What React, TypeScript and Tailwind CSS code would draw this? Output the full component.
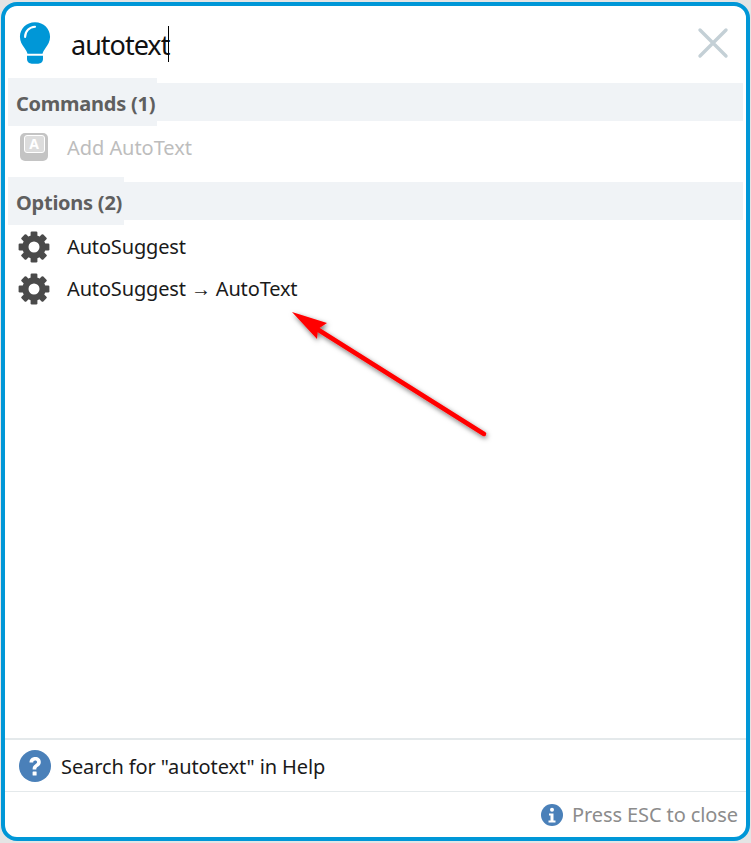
const font = { fontFamily: '"Noto Sans", "Open Sans", sans-serif' }

function Gear() {
  const teeth = [0, 45, 90, 135, 180, 225, 270, 315]
  return (
    <svg width="32" height="32" viewBox="0 0 32 32" className="shrink-0">
      {teeth.map(a => (
        <rect key={a} x="12.6" y="0.6" width="6.8" height="8" rx="1.2" fill="#4a4a4a" transform={`rotate(${a} 16 16)`} />
      ))}
      <circle cx="16" cy="16" r="8.6" fill="none" stroke="#4a4a4a" strokeWidth="6.2" />
    </svg>
  )
}

function Section({ label, width }: { label: string; width: string }) {
  return (
    <div className="mx-[3px] h-[38px] bg-[#f0f3f6] relative">
      <div className={`absolute left-0 top-[-5px] h-[48px] bg-[#f0f3f6] pl-2 pt-[3px] flex items-center text-[20px] font-bold text-[#5f5f5f] tracking-[-0.25px] ${width}`}>
        {label}
      </div>
    </div>
  )
}

function Row({ label }: { label: string }) {
  return (
    <div className="h-[42px] flex items-center pl-[13px] text-[20px] text-[#1a1a1a] tracking-[-0.15px]">
      <Gear />
      <span className="ml-[17px]">{label}</span>
    </div>
  )
}

export default function App() {
  return (
    <div className="w-[751px] h-[843px] bg-[#e4e4e4] overflow-hidden pt-[2px] pl-[1px]" style={font}>
      <div className="relative w-[749px] h-[839px] bg-white border-[4px] border-[#0097d7] rounded-[16px] flex flex-col">
        <div className="h-[77px] flex items-center pl-[14px] pr-[12px] shrink-0">
          <svg width="32" height="46" viewBox="1 0 34 46" className="shrink-0 mt-[-3px]">
            <path d="M18 1C8.6 1 2 8 2 16.4c0 5 2.3 8.600 4.800 12 1.800 2.500 2.700 4.300 3.200 6.100h16c.5-1.800 1.400-3.600 3.200-6.100 2.500-3.400 4.800-7 4.800-12C34 8 27.400 1 18 1z" fill="#0097d7" />
            <path d="M7.500 16.500C7.500 10.500 12 6 18 5.800" fill="none" stroke="#fff" strokeWidth="2.200" strokeLinecap="round" />
            <path d="M9.500 36.500h17v3.500c0 3-2.500 5-5 5h-7c-2.500 0-5-2-5-5z" fill="#0097d7" />
          </svg>
          <div className="ml-[20px] flex items-center text-[27px] text-[#111] tracking-[-1px] pt-[2px]">
            autotext
            <span className="w-px h-[36px] bg-black ml-[-1px] mt-[-3px]" />
          </div>
          <svg width="34" height="34" viewBox="0 0 34 34" className="ml-auto mt-[-3px] mr-[4px]">
            <path d="M4 4l26 26M30 4L4 30" stroke="#c4d0d6" strokeWidth="3.400" strokeLinecap="round" />
          </svg>
        </div>

        <Section label="Commands (1)" width="w-[149px]" />
        <div className="h-[61px] pt-[5px] shrink-0">
          <div className="h-[42px] flex items-center pl-[15px] text-[20px] text-[#bdbdbd] tracking-[-0.05px]">
            <div className="w-[28px] h-[28px] rounded-[5px] bg-[#c4c4c4] flex justify-center pt-[2px] shrink-0">
              <div className="w-[21px] h-[18px] rounded-[3px] bg-[#dcdcdc] border border-white flex items-center justify-center text-[14px] font-bold leading-none text-white">A</div>
            </div>
            <span className="ml-[19px] mt-[2px]">Add AutoText</span>
          </div>
        </div>

        <Section label="Options (2)" width="w-[116px]" />
        <div className="pt-[6px]">
          <Row label="AutoSuggest" />
          <Row label="AutoSuggest → AutoText" />
        </div>

        <div className="mt-auto border-t-2 border-[#e4e9eb] h-[53px] flex items-center pl-[14px] text-[20px] text-[#1a1a1a] tracking-[-0.1px]">
          <svg width="32" height="32" viewBox="0 0 32 32" className="shrink-0">
            <circle cx="16" cy="16" r="16" fill="#4a80b9" />
            <path d="M10.500 12.500c0-3.300 2.400-5.500 5.700-5.500s5.600 2 5.600 5c0 2.500-1.400 3.700-3 4.800-1.200.8-1.500 1.300-1.500 2.700h-3.700c0-2.700.7-3.800 2.500-5 1.300-.9 2-1.400 2-2.400 0-1-.8-1.700-1.900-1.700-1.300 0-2 .9-2 2.100z" fill="#fff" />
            <rect x="13.600" y="21.500" width="4" height="4" rx="0.500" fill="#fff" />
          </svg>
          <span className="ml-[10px] mt-[2px]">Search for "autotext" in Help</span>
        </div>
        <div className="border-t border-[#e4e9eb] h-[46px] flex items-center justify-end pr-[8px] text-[20px] text-[#8c8c8c] tracking-[-0.1px] shrink-0">
          <svg width="22" height="22" viewBox="0 0 22 22" className="shrink-0">
            <circle cx="11" cy="11" r="11" fill="#4a80b9" />
            <circle cx="11" cy="5.800" r="2" fill="#fff" />
            <path d="M8 9.500h4.500v7H14.500v2h-7v-2h2v-5H8z" fill="#fff" />
          </svg>
          <span className="ml-[9px]">Press ESC to close</span>
        </div>

        <svg width="240" height="170" viewBox="0 0 240 170" className="absolute left-[267px] top-[288px] pointer-events-none">
          <defs>
            <filter id="arrowShadow" x="-20%" y="-20%" width="140%" height="140%">
              <feDropShadow dx="1" dy="2" stdDeviation="2.500" floodColor="#000" floodOpacity="0.55" />
            </filter>
          </defs>
          <g filter="url(#arrowShadow)">
            <path d="M45 35L212 140" stroke="#ff0000" strokeWidth="4.500" strokeLinecap="round" />
            <path d="M20 18L55 29 46 35 45 45z" fill="#ff0000" />
          </g>
        </svg>
      </div>
    </div>
  )
}
